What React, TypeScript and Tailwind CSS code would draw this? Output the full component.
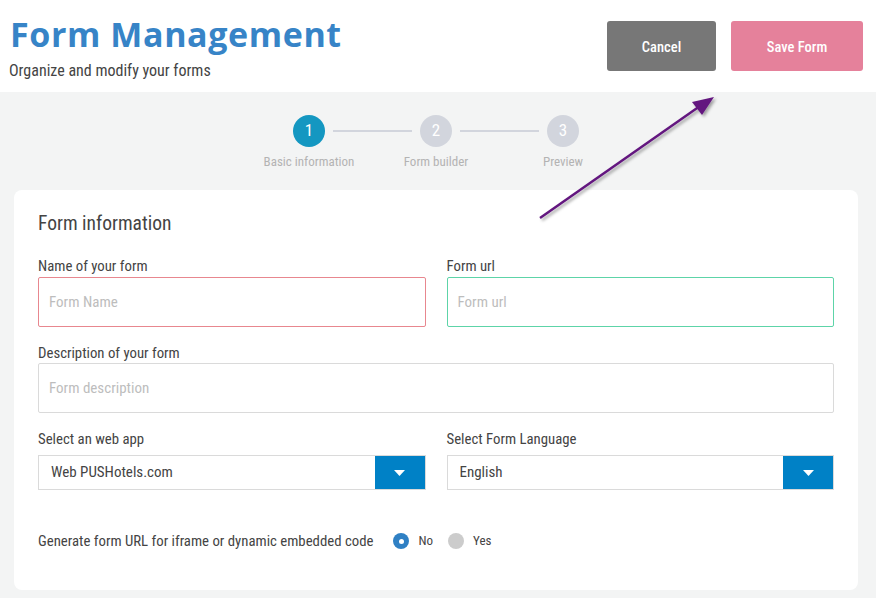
import React from "react";

const body = { fontFamily: '"Roboto Condensed", "Liberation Sans Narrow", Roboto, sans-serif' };

function Step({ n, label, active }: { n: number; label: string; active?: boolean }) {
  return (
    <div className="flex flex-col items-center w-8 relative">
      <div
        className={
          "w-8 h-8 rounded-full flex items-center justify-center text-white text-[17px] " +
          (active ? "bg-[#1497c1]" : "bg-[#d2d5dd]")
        }
      >
        {n}
      </div>
      <span className="absolute top-[37px] whitespace-nowrap text-[13px] text-[#b3b3b3]">{label}</span>
    </div>
  );
}

function Select({ value }: { value: string }) {
  return (
    <div className="flex h-[35px] border border-[#dadada] bg-white">
      <div className="flex-1 flex items-center pl-3 text-[15px] text-[#444]">{value}</div>
      <div className="w-[50px] bg-[#0081c6] flex items-center justify-center">
        <svg width="11" height="6" viewBox="0 0 11 6">
          <path d="M0 0h11L5.5 6z" fill="#fff" />
        </svg>
      </div>
    </div>
  );
}

export default function App() {
  return (
    <div className="relative w-[876px] h-[598px] overflow-hidden bg-[#f3f4f4]" style={body}>
      <header className="h-[92px] bg-white flex justify-between px-[10px]">
        <div className="pt-[12px]">
          <h1
            className="text-[34px] leading-[44px] font-bold text-[#3784c7] tracking-[0.6px]"
            style={{ fontFamily: '"Open Sans", sans-serif' }}
          >
            Form Management
          </h1>
          <p className="mt-[3px] text-[16px] text-[#444] -ml-[1px]">Organize and modify your forms</p>
        </div>
        <div className="flex gap-[15px] pt-[21px] pr-[3px]">
          <button className="w-[109px] h-[50px] pt-[3px] rounded-[3px] bg-[#777777] text-white text-[14.5px] font-medium">
            Cancel
          </button>
          <button className="w-[132px] h-[50px] pt-[3px] rounded-[3px] bg-[#e5819b] text-white text-[14.5px] font-medium">
            Save Form
          </button>
        </div>
      </header>

      <div className="flex justify-center items-center pt-[23px] pr-[4px]">
        <Step n={1} label="Basic information" active />
        <div className="w-[79px] h-[2px] bg-[#d2d5dd] mx-[8px]" />
        <Step n={2} label="Form builder" />
        <div className="w-[79px] h-[2px] bg-[#d2d5dd] mx-[8px]" />
        <Step n={3} label="Preview" />
      </div>

      <main className="mx-[14px] mt-[43px] mr-[18px] h-[400px] bg-white rounded-[8px] px-[24px] pt-[22px]">
        <h2 className="text-[19.5px] text-[#444] leading-[24px]">Form information</h2>
        <div className="grid grid-cols-2 gap-x-[21px] mt-[21px]">
          <div>
            <label className="block text-[14.8px] text-[#444] leading-[18px] mb-[2px]">Name of your form</label>
            <div className="h-[50px] border border-[#e8878f] rounded-[2px] flex items-center px-[10px] text-[15px] text-[#bdbdbd]">
              Form Name
            </div>
          </div>
          <div>
            <label className="block text-[14.8px] text-[#444] leading-[18px] mb-[2px]">Form url</label>
            <div className="h-[50px] border border-[#5dd4a8] rounded-[2px] flex items-center px-[10px] text-[15px] text-[#bdbdbd]">
              Form url
            </div>
          </div>
        </div>

        <div className="mt-[17px]">
          <label className="block text-[14.8px] text-[#444] leading-[18px] mb-[1px]">Description of your form</label>
          <div className="h-[50px] border border-[#dadada] rounded-[2px] flex items-center px-[10px] text-[15px] text-[#bdbdbd]">
            Form description
          </div>
        </div>

        <div className="grid grid-cols-2 gap-x-[21px] mt-[17px]">
          <div>
            <label className="block text-[14.8px] text-[#444] leading-[18px] mb-[7px]">Select an web app</label>
            <Select value="Web PUSHotels.com" />
          </div>
          <div>
            <label className="block text-[14.8px] text-[#444] leading-[18px] mb-[7px]">Select Form Language</label>
            <Select value="English" />
          </div>
        </div>

        <div className="flex items-center mt-[40px] text-[14.8px] text-[#444]">
          <span>Generate form URL for iframe or dynamic embedded code</span>
          <span className="ml-[20px] w-4 h-4 rounded-full bg-[#2f80c4] flex items-center justify-center">
            <span className="w-[5px] h-[5px] rounded-full bg-white" />
          </span>
          <span className="ml-[9px] text-[13px]">No</span>
          <span className="ml-[15px] w-4 h-4 rounded-full bg-[#cccccc]" />
          <span className="ml-[9px] text-[13px]">Yes</span>
        </div>
      </main>

      <svg className="absolute left-0 top-0 pointer-events-none" width="876" height="598">
        <defs>
          <filter id="sh" x="-20%" y="-20%" width="140%" height="140%">
            <feDropShadow dx="2" dy="2" stdDeviation="1.5" floodColor="#000" floodOpacity="0.35" />
          </filter>
        </defs>
        <g filter="url(#sh)">
          <line x1="540" y1="218" x2="700" y2="106" stroke="#63187f" strokeWidth="2.5" />
          <path d="M714 97 L692 102 L702 115 Z" fill="#63187f" />
        </g>
      </svg>
    </div>
  );
}
